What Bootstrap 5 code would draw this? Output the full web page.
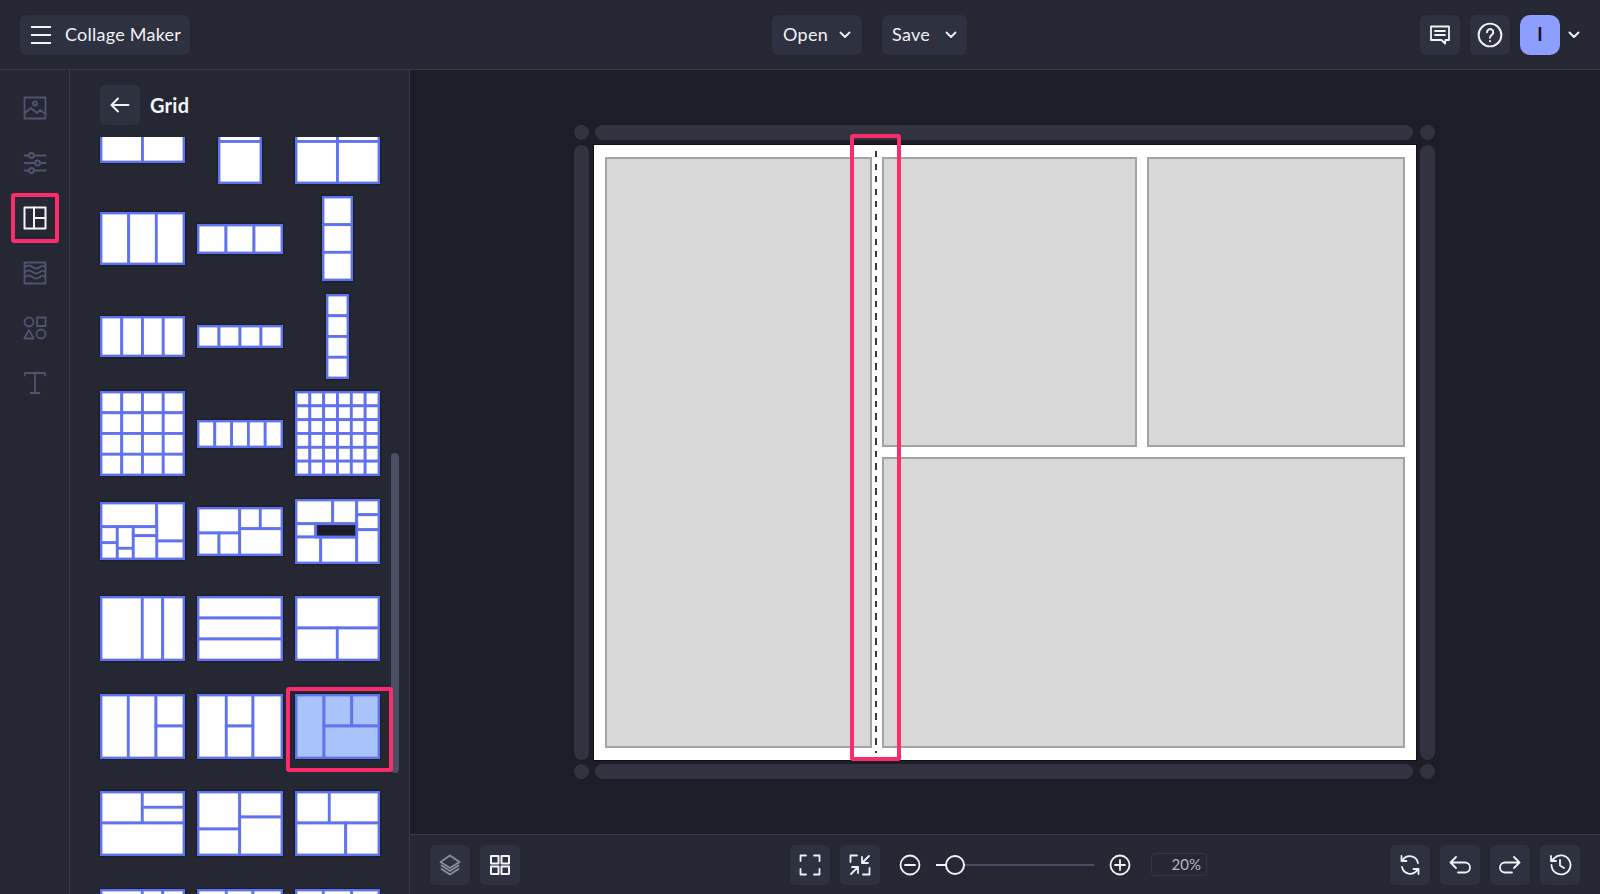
<!DOCTYPE html>
<html lang="en">
<head>
    <meta charset="UTF-8">
    <meta name="viewport" content="width=device-width, initial-scale=1.0">
    <title>Collage Maker</title>
    <link href="https://cdn.jsdelivr.net/npm/bootstrap@5.3.1/dist/css/bootstrap.min.css" rel="stylesheet">
    <style>
        html, body { height: 100%; }
        body { background: #1c1d27; color: #e8e9ee; font-family: Lato, "Open Sans", sans-serif; overflow: hidden; }
        svg { display: block; }
        .icon { fill: none; stroke: currentColor; stroke-width: 1.8; stroke-linecap: round; stroke-linejoin: round; }

        .app-top { height: 70px; background: #252733; border-bottom: 1px solid #373a49; padding: 0 20px; }
        .tool-btn { height: 40px; min-width: 40px; padding: 0; background: #2e3140; border: 0; border-radius: 6px; color: #f1f2f5; font-size: 18px; letter-spacing: .25px; display: inline-flex; align-items: center; justify-content: center; }
        .tool-btn:hover { background: #2e3140; color: #f1f2f5; }
        .brand-btn { width: 170px; justify-content: flex-start; padding-left: 11px; gap: 14px; }
        .menu-btn { gap: 11px; }
        .open-btn { width: 90px; margin-left: 582px; }
        .save-btn { width: 85px; margin-left: 20px; gap: 15px; }
        .top-tools { gap: 10px; }
        .avatar-btn { width: 40px; background: #8c9eff; color: #14151c; border-radius: 10px; font-weight: 700; }
        .avatar-btn:hover { background: #8c9eff; color: #14151c; }
        .avatar-caret { color: #f1f2f5; margin-left: -2px; }
        .dim-icon { color: #8a8d9b; }
        .dim-icon:hover { color: #8a8d9b; }

        .app-rail { width: 70px; background: #252733; border-right: 1px solid #373a49; padding-top: 10px; color: #50546e; }
        .rail-item { height: 55px; }
        .rail-item.is-on { color: #f4f5f8; }
        .mark-box { position: absolute; border: 4px solid #fb2c6b; border-radius: 3px; pointer-events: none; }
        .rail-mark { left: 11px; top: 2.5px; width: 48px; height: 50px; }

        .side-panel { width: 340px; background: #252733; border-right: 1px solid #373a49; }
        .panel-head { height: 40px; margin: 15px 0 12px 30px; gap: 10px; font-size: 20px; font-weight: 700; letter-spacing: .25px; color: #f4f5f8; }
        .thumb-clip { overflow: hidden; }
        .thumb-grid { display: grid; grid-template-columns: 85px 86px 85px; grid-auto-rows: 85.5px; gap: 12px; margin: -38.75px 0 0 30px; }
        .thumb-cell { display: flex; align-items: center; justify-content: center; position: relative; }
        .thumb-cell svg { filter: drop-shadow(0 0 1px #0c0d12); flex: none; }
        .thumb-mark { left: -9px; top: 3.5px; width: 107px; height: 85px; z-index: 2; }
        .thumb-bar { position: absolute; left: 321px; top: 383px; width: 8px; height: 320px; background: #4a4f63; border-radius: 4px; }

        .stage { background: #1c1d27; min-height: 0; }
        .stage-grid { display: grid; grid-template-columns: 15px 822px 15px; grid-template-rows: 15px 615px 15px; gap: 4.5px; margin-right: 1px; }
        .stage-bar { background: #32333f; border-radius: 8px; }
        .stage-bar.h-side { margin: 0 3px 0 1px; }
        .stage-dot { background: #32333f; border-radius: 50%; }
        .art-board { background: #fff; box-shadow: 0 0 0 1px #0f1016; position: relative; padding: 12px 11px; display: grid; grid-template-columns: 267px 255px 258px; grid-template-rows: 290px 291px; gap: 10px; }
        .art-cell { background: #d8d8d8; border: 2px solid #a3a3a3; }
        .art-cell.tall { grid-row: span 2; }
        .art-cell.wide { grid-column: span 2; }
        .cut-guide { position: absolute; left: 281px; top: 6px; width: 2px; height: 602px; background: repeating-linear-gradient(to bottom, #3a3a3a 0 6px, transparent 6px 12.5px); }
        .board-mark { left: 256px; top: -11px; width: 51px; height: 627px; }

        .app-foot { height: 60px; background: #252733; border-top: 1px solid #373a49; padding: 0 20px; }
        .foot-tools { gap: 10px; }
        .zoom-set { margin-left: 270px; gap: 0; }
        .zoom-set .tool-btn + .tool-btn { margin-left: 10px; }
        .zoom-icon { color: #f1f2f5; margin-left: 19px; }
        .zoom-plus { color: #f1f2f5; }
        .zoom-track { width: 158px; height: 2px; background: #4a4f63; margin: 0 15px; position: relative; }
        .zoom-fill { width: 10px; height: 2px; background: #f1f2f5; }
        .zoom-knob { position: absolute; left: 9px; top: -9px; width: 20px; height: 20px; border-radius: 50%; border: 2.5px solid #f1f2f5; background: #252733; }
        .zoom-pct { width: 56px; height: 23px; margin-left: 20px; padding-right: 5px; border: 1px solid #33364a; border-radius: 4px; font-size: 15px; line-height: 21px; text-align: right; color: #b5b7c2; }
    </style>
</head>
<body class="d-flex flex-column">

<!-- top bar -->
<header class="app-top d-flex align-items-center flex-shrink-0">
    <button class="btn tool-btn brand-btn" type="button">
        <svg class="icon" width="20" height="18" viewBox="0 0 20 18" style="stroke-width:2"><path d="M0 1h20M0 9h20M0 17h20"/></svg>
        Collage Maker
    </button>
    <button class="btn tool-btn menu-btn open-btn" type="button">Open
        <svg class="icon" width="12" height="8" viewBox="0 0 12 8"><path d="M1.5 1.5 6 6l4.5-4.500"/></svg>
    </button>
    <button class="btn tool-btn menu-btn save-btn" type="button">Save
        <svg class="icon" width="12" height="8" viewBox="0 0 12 8"><path d="M1.5 1.5 6 6l4.5-4.500"/></svg>
    </button>
    <div class="ms-auto d-flex align-items-center top-tools">
        <button class="btn tool-btn" type="button">
            <svg class="icon" width="24" height="24" viewBox="0 0 24 24"><path d="M3 3.500h18v13.500h-3.500l-.5 3.500-3.500-3.500H3z"/><path d="M7 8h10M7 12h10"/></svg>
        </button>
        <button class="btn tool-btn" type="button">
            <svg class="icon" width="26" height="26" viewBox="0 0 24 24"><circle cx="12" cy="12" r="10.500"/><path d="M9.200 9.400a2.900 2.900 0 1 1 4.600 2.400c-1.100.8-1.800 1.300-1.800 2.800"/><path d="M12 17.600v.1"/></svg>
        </button>
        <button class="btn tool-btn avatar-btn" type="button">I</button>
        <svg class="icon avatar-caret" width="12" height="8" viewBox="0 0 12 8" style="stroke-width:2"><path d="M1.500 1.500 6 6l4.500-4.500"/></svg>
    </div>
</header>

<div class="d-flex flex-grow-1" style="min-height:0">
    <!-- left rail -->
    <nav class="app-rail flex-shrink-0">
        <div class="rail-item d-flex align-items-center justify-content-center">
            <svg class="icon" width="24" height="24" viewBox="0 0 24 24"><rect x="1.500" y="1.500" width="21" height="21"/><circle cx="12" cy="7.500" r="2"/><path d="M2 17l6-5 6 5 3-3 5.500 4"/></svg>
        </div>
        <div class="rail-item d-flex align-items-center justify-content-center">
            <svg class="icon" width="24" height="24" viewBox="0 0 24 24"><path d="M1.500 4.500h5M10.500 4.500h12M1.500 12h11M17 12h5.500M1.500 19.500h5M10.500 19.500h12"/><circle cx="8.500" cy="4.500" r="2.500"/><circle cx="14.500" cy="12" r="2.500"/><circle cx="8.500" cy="19.500" r="2.500"/></svg>
        </div>
        <div class="rail-item is-on d-flex align-items-center justify-content-center position-relative">
            <svg class="icon" width="24" height="24" viewBox="0 0 24 24" style="stroke-width:2"><rect x="1.500" y="1.500" width="21" height="21"/><path d="M11 1.500v21M11 12h11.500"/></svg>
            <span class="mark-box rail-mark"></span>
        </div>
        <div class="rail-item d-flex align-items-center justify-content-center">
            <svg class="icon" width="24" height="24" viewBox="0 0 24 24"><rect x="1.500" y="1.500" width="21" height="21"/><path d="M2 6c2.500-2 5-2 7.500 0s5 2 7.500 0 3.500-1.500 5 0M2 11c2.500-2 5-2 7.500 0s5 2 7.500 0 3.500-1.500 5 0M2 16c2.500-2 5-2 7.500 0s5 2 7.500 0 3.500-1.500 5 0"/></svg>
        </div>
        <div class="rail-item d-flex align-items-center justify-content-center">
            <svg class="icon" width="24" height="24" viewBox="0 0 24 24"><circle cx="6" cy="6" r="4.500"/><rect x="14" y="1.500" width="8.500" height="8.500"/><path d="M6 14l4.700 8.500H1.300z"/><circle cx="18" cy="18" r="4.500"/></svg>
        </div>
        <div class="rail-item d-flex align-items-center justify-content-center">
            <svg class="icon" width="24" height="24" viewBox="0 0 24 24"><path d="M2 4.500V2h20v2.500M12 2v20M7.500 22h9"/></svg>
        </div>
    </nav>

    <!-- grid panel -->
    <aside class="side-panel flex-shrink-0 d-flex flex-column position-relative">
        <div class="panel-head d-flex align-items-center flex-shrink-0">
            <button class="btn tool-btn" type="button">
                <svg class="icon" width="20" height="16" viewBox="0 0 20 16" style="stroke-width:2"><path d="M18.500 8H2M8 1.500 1.500 8 8 14.500"/></svg>
            </button>
            <span>Grid</span>
        </div>
        <div class="thumb-clip flex-grow-1">
            <div class="thumb-grid" id="thumbGrid"></div>
        </div>
        <div class="thumb-bar"></div>
    </aside>

    <div class="flex-grow-1 d-flex flex-column" style="min-width:0">
        <!-- canvas -->
        <main class="stage flex-grow-1 d-flex align-items-center justify-content-center">
            <div class="stage-grid">
                <div class="stage-dot"></div>
                <div class="stage-bar h-side"></div>
                <div class="stage-dot"></div>
                <div class="stage-bar"></div>
                <div class="art-board">
                    <div class="art-cell tall"></div>
                    <div class="art-cell"></div>
                    <div class="art-cell"></div>
                    <div class="art-cell wide"></div>
                    <div class="cut-guide"></div>
                    <div class="mark-box board-mark"></div>
                </div>
                <div class="stage-bar"></div>
                <div class="stage-dot"></div>
                <div class="stage-bar h-side"></div>
                <div class="stage-dot"></div>
            </div>
        </main>

        <!-- bottom bar -->
        <footer class="app-foot d-flex align-items-center flex-shrink-0">
            <div class="d-flex foot-tools">
                <button class="btn tool-btn dim-icon" type="button">
                    <svg class="icon" width="24" height="24" viewBox="0 0 24 24"><path d="M12 2.500 21.500 9 12 15 2.500 9z"/><path d="M3.500 12.500 12 18l8.500-5.500M3.500 16 12 21.500l8.500-5.500"/></svg>
                </button>
                <button class="btn tool-btn" type="button">
                    <svg class="icon" width="22" height="22" viewBox="0 0 22 22" style="stroke-width:2"><rect x="2" y="2" width="7.500" height="7.500"/><rect x="12.500" y="2" width="7.500" height="7.500"/><rect x="2" y="12.500" width="7.500" height="7.500"/><rect x="12.500" y="12.500" width="7.500" height="7.500"/></svg>
                </button>
            </div>
            <div class="zoom-set d-flex align-items-center">
                <button class="btn tool-btn" type="button">
                    <svg class="icon" width="22" height="22" viewBox="0 0 22 22"><path d="M1.500 7V1.500H7M15 1.500h5.500V7M20.500 15v5.500H15M7 20.500H1.500V15"/></svg>
                </button>
                <button class="btn tool-btn" type="button">
                    <svg class="icon" width="22" height="22" viewBox="0 0 22 22"><path d="M1.500 8V1.500H8M20.500 14v6.500H14"/><path d="M13 3v6h6M13 9l7-7M3 13h6v6M9 13l-7 7"/></svg>
                </button>
                <svg class="icon zoom-icon" width="22" height="22" viewBox="0 0 22 22"><circle cx="11" cy="11" r="9.500"/><path d="M6 11h10"/></svg>
                <div class="zoom-track"><div class="zoom-fill"></div><div class="zoom-knob"></div></div>
                <svg class="icon zoom-plus" width="22" height="22" viewBox="0 0 22 22"><circle cx="11" cy="11" r="9.500"/><path d="M6 11h10M11 6v10"/></svg>
                <div class="zoom-pct">20%</div>
            </div>
            <div class="ms-auto d-flex foot-tools">
                <button class="btn tool-btn" type="button">
                    <svg class="icon" width="24" height="24" viewBox="0 0 24 24"><path d="M20 10a8.500 8.500 0 0 0-15-3.500L3.500 8M3.500 3v5h5M4 14a8.500 8.500 0 0 0 15 3.500l1.500-1.500M20.500 21v-5h-5"/></svg>
                </button>
                <button class="btn tool-btn" type="button">
                    <svg class="icon" width="24" height="24" viewBox="0 0 24 24"><path d="M8 4 2.500 9.500 8 15M2.500 9.500H17a4.500 4.500 0 0 1 0 10H10"/></svg>
                </button>
                <button class="btn tool-btn" type="button">
                    <svg class="icon" width="24" height="24" viewBox="0 0 24 24"><path d="M16 4l5.500 5.500L16 15M21.500 9.500H7a4.500 4.500 0 0 0 0 10h7"/></svg>
                </button>
                <button class="btn tool-btn" type="button">
                    <svg class="icon" width="24" height="24" viewBox="0 0 24 24"><path d="M3.500 12A9.500 9.500 0 1 0 6 5.500L3.500 8M3 3v5h5M12 7v5.500l4 2.500"/></svg>
                </button>
            </div>
        </footer>
    </div>
</div>

<script>
    // helpers for the layout thumbnails: cells are [x0, y0, x1, y1] on stroke centre lines
    const cols = (w, h, n) => Array.from({length: n}, (_, i) => [1 + i * (w - 2) / n, 1, 1 + (i + 1) * (w - 2) / n, h - 1]);
    const rows = (w, h, n) => Array.from({length: n}, (_, i) => [1, 1 + i * (h - 2) / n, w - 1, 1 + (i + 1) * (h - 2) / n]);
    const mesh = (w, h, n) => {
        const out = [];
        const s = (w - 2) / n;
        for (let r = 0; r < n; r++) {
            for (let c = 0; c < n; c++) {
                out.push([1 + c * s, 1 + r * s, 1 + (c + 1) * s, 1 + (r + 1) * s]);
            }
        }
        return out;
    };

    const thumbs = [
        {w: 85, h: 44, cells: cols(85, 44, 2)},
        {w: 44, h: 85, cells: rows(44, 85, 2)},
        {w: 85, h: 85, cells: mesh(85, 85, 2)},

        {w: 85, h: 53, cells: cols(85, 53, 3)},
        {w: 86, h: 30, cells: cols(86, 30, 3)},
        {w: 31, h: 85, cells: rows(31, 85, 3)},

        {w: 85, h: 41, cells: cols(85, 41, 4)},
        {w: 86, h: 23, cells: cols(86, 23, 4)},
        {w: 23, h: 85, cells: rows(23, 85, 4)},

        {w: 85, h: 85, cells: mesh(85, 85, 4)},
        {w: 86, h: 28, cells: cols(86, 28, 5)},
        {w: 85, h: 85, cells: mesh(85, 85, 6)},

        {w: 85, h: 58, cells: [[1,1,56.7,24.7],[56.7,1,84,39],[56.7,39,84,57],[1,24.7,17.3,40.7],[1,40.7,17.3,57],[17.3,24.7,33.3,46.3],[17.3,46.3,33.3,57],[33.3,24.7,56.7,33.7],[33.3,33.7,56.7,57]]},
        {w: 86, h: 49, cells: [[1,1,42.7,26],[42.7,1,63.3,21.7],[63.3,1,85,21.7],[1,26,22,48],[22,26,42.7,48],[42.7,21.7,85,48]]},
        {w: 85, h: 65, hole: [20.7,24.7,61.7,38], cells: [[1,1,37.7,24.7],[37.7,1,61.7,24.7],[61.7,1,84,15.7],[61.7,15.7,84,30.7],[1,24.7,20.7,38],[1,38,25.7,64],[25.7,38,61.7,64],[61.7,30.7,84,64]]},

        {w: 85, h: 65, cells: [[1,1,42.3,64],[42.3,1,62.7,64],[62.7,1,84,64]]},
        {w: 86, h: 65, cells: rows(86, 65, 3)},
        {w: 85, h: 65, cells: [[1,1,84,32],[1,32,42.3,64],[42.3,32,84,64]]},

        {w: 85, h: 65, cells: [[1,1,28.3,64],[28.3,1,56,64],[56,1,84,32],[56,32,84,64]]},
        {w: 86, h: 65, cells: [[1,1,29.3,64],[29.3,1,56,32],[29.3,32,56,64],[56,1,85,64]]},
        {w: 85, h: 65, on: true, cells: [[1,1,29,64],[29,1,56.7,32],[56.7,1,84,32],[29,32,84,64]]},

        {w: 85, h: 65, cells: [[1,1,42.3,32],[42.3,1,84,16.3],[42.3,16.3,84,32],[1,32,84,64]]},
        {w: 86, h: 65, cells: [[1,1,42.7,38],[1,38,42.7,64],[42.7,1,85,26],[42.7,26,85,64]]},
        {w: 85, h: 65, cells: [[1,1,34.3,32],[34.3,1,84,32],[1,32,50.7,64],[50.7,32,84,64]]},

        {w: 85, h: 65, cells: [[1,1,42.3,64],[42.3,1,62.7,64],[62.7,1,84,64]]},
        {w: 86, h: 65, cells: [[1,1,29.3,64],[29.3,1,56,64],[56,1,85,64]]},
        {w: 85, h: 65, cells: [[1,1,28.3,64],[28.3,1,56.7,64],[56.7,1,84,64]]}
    ];

    const blue = "#6072ee";
    const rect = (c, fill) => `<rect x="${c[0]}" y="${c[1]}" width="${c[2] - c[0]}" height="${c[3] - c[1]}" fill="${fill}" stroke="${blue}" stroke-width="2.8"/>`;

    document.getElementById("thumbGrid").innerHTML = thumbs.map((t) => {
        const fill = t.on ? "#a9c3fb" : "#fff";
        const hole = t.hole ? rect(t.hole, "#1c1d27") : "";
        const mark = t.on ? '<span class="mark-box thumb-mark"></span>' : "";
        return `<div class="thumb-cell"><svg width="${t.w}" height="${t.h}" viewBox="0 0 ${t.w} ${t.h}">${t.cells.map((c) => rect(c, fill)).join("")}${hole}</svg>${mark}</div>`;
    }).join("");
</script>
<script src="https://cdn.jsdelivr.net/npm/bootstrap@5.3.1/dist/js/bootstrap.bundle.min.js"></script>
</body>
</html>
